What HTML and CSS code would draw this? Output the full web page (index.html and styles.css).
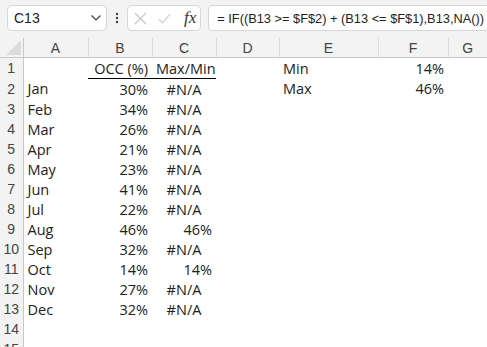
FILE: index.html
```html
<!DOCTYPE html>
<html>
<head>
  <title>Sheet1</title>
  <link rel="stylesheet" href="styles.css">
</head>
<body>
  <div class="toolbar">
    <div class="name-box">
      <span>C13</span>
      <svg class="chevron" width="12" height="8" viewBox="0 0 12 8"><path d="M1.5 1.5 L6 6 L10.5 1.5" fill="none" stroke="#444" stroke-width="1.2"/></svg>
    </div>
    <svg class="dots" width="4" height="12" viewBox="0 0 4 12"><circle cx="2" cy="2" r="1.2" fill="#444"/><circle cx="2" cy="6" r="1.2" fill="#444"/><circle cx="2" cy="10" r="1.2" fill="#444"/></svg>
    <div class="fx-box">
      <svg width="13" height="13" viewBox="0 0 13 13"><path d="M1 1 L12 12 M12 1 L1 12" stroke="#c4c4c4" stroke-width="1.1"/></svg>
      <svg width="13" height="11" viewBox="0 0 13 11"><path d="M1 6 L4.5 10 L12 1" fill="none" stroke="#c4c4c4" stroke-width="1.1"/></svg>
      <span class="fx">fx</span>
    </div>
    <div class="formula-box">= IF((B13 &gt;= $F$2) + (B13 &lt;= $F$1),B13,NA())</div>
  </div>

  <table class="sheet">
    <colgroup>
      <col style="width:23px"><col style="width:65px"><col style="width:64px"><col style="width:64px">
      <col style="width:63px"><col style="width:99px"><col style="width:70px"><col>
    </colgroup>
    <tr class="col-head">
      <th class="corner"><div class="tri"></div></th>
      <th>A</th><th>B</th><th>C</th><th>D</th><th>E</th><th>F</th><th>G</th>
    </tr>
    <tr><th>1</th><td></td><td class="num line">OCC (%)</td><td class="num line">Max/Min</td><td></td><td>Min</td><td class="num">14%</td><td></td></tr>
    <tr><th>2</th><td>Jan</td><td class="num">30%</td><td class="err">#N/A</td><td></td><td>Max</td><td class="num">46%</td><td></td></tr>
    <tr><th>3</th><td>Feb</td><td class="num">34%</td><td class="err">#N/A</td><td></td><td></td><td></td><td></td></tr>
    <tr><th>4</th><td>Mar</td><td class="num">26%</td><td class="err">#N/A</td><td></td><td></td><td></td><td></td></tr>
    <tr><th>5</th><td>Apr</td><td class="num">21%</td><td class="err">#N/A</td><td></td><td></td><td></td><td></td></tr>
    <tr><th>6</th><td>May</td><td class="num">23%</td><td class="err">#N/A</td><td></td><td></td><td></td><td></td></tr>
    <tr><th>7</th><td>Jun</td><td class="num">41%</td><td class="err">#N/A</td><td></td><td></td><td></td><td></td></tr>
    <tr><th>8</th><td>Jul</td><td class="num">22%</td><td class="err">#N/A</td><td></td><td></td><td></td><td></td></tr>
    <tr><th>9</th><td>Aug</td><td class="num">46%</td><td class="num">46%</td><td></td><td></td><td></td><td></td></tr>
    <tr><th>10</th><td>Sep</td><td class="num">32%</td><td class="err">#N/A</td><td></td><td></td><td></td><td></td></tr>
    <tr><th>11</th><td>Oct</td><td class="num">14%</td><td class="num">14%</td><td></td><td></td><td></td><td></td></tr>
    <tr><th>12</th><td>Nov</td><td class="num">27%</td><td class="err">#N/A</td><td></td><td></td><td></td><td></td></tr>
    <tr><th>13</th><td>Dec</td><td class="num">32%</td><td class="err">#N/A</td><td></td><td></td><td></td><td></td></tr>
    <tr><th>14</th><td></td><td></td><td></td><td></td><td></td><td></td><td></td></tr>
    <tr><th>15</th><td></td><td></td><td></td><td></td><td></td><td></td><td></td></tr>
  </table>
</body>
</html>
```

FILE: styles.css
```css
/* Sheet view */
body {
  margin: 0;
  background-color: #fff;
  font-family: "Open Sans", sans-serif;
  color: #222;
  overflow: hidden;
}

.toolbar {
  height: 38px;
  padding: 5px 0 0 7px;
  box-sizing: border-box;
  background-color: #f3f3f3;
  display: flex;
  align-items: flex-start;
}
.name-box,
.fx-box,
.formula-box {
  height: 26px;
  box-sizing: border-box;
  background-color: #fff;
  border: 1px solid #d6d6d6;
  border-radius: 5px;
  display: flex;
  align-items: center;
  font-size: 14px;
}
.name-box {
  flex: 0 0 100px;
  padding: 0 4px 0 6px;
  justify-content: space-between;
  font-family: "Liberation Sans", sans-serif;
}
.dots {
  flex: 0 0 auto;
  margin: 7px 8px 0 8px;
}
.fx-box {
  flex: 0 0 72px;
  padding: 0 4px 0 6px;
  gap: 11px;
}
.fx {
  font-family: "Liberation Serif", serif;
  font-style: italic;
  font-size: 17px;
  color: #333;
  margin-left: 2px;
}
.formula-box {
  flex: 1 1 auto;
  min-width: 0;
  overflow: hidden;
  margin-left: 7px;
  padding-left: 8px;
  border-right: none;
  border-radius: 5px 0 0 5px;
  font-family: "Liberation Sans", sans-serif;
  font-size: 12.8px;
  white-space: nowrap;
  color: #222;
}

.sheet {
  border-collapse: collapse;
  table-layout: fixed;
  width: 100%;
}
.sheet th {
  font-weight: normal;
  font-family: "Liberation Sans", sans-serif;
  font-size: 14px;
  color: #444;
  background-color: #f3f3f3;
  border-right: 1px solid #c8c8c8;
  padding: 0;
  height: 20px;
  text-align: center;
}
.col-head th {
  height: 19px;
  border-right: 1px solid #dcdcdc;
  border-bottom: 1px solid #c8c8c8;
}
.col-head th:last-child {
  border-right: none;
}
.sheet th.corner {
  position: relative;
  border-right: 1px solid #c8c8c8;
}
.tri {
  position: absolute;
  right: 2px;
  bottom: 2px;
  width: 0;
  height: 0;
  border-left: 15px solid transparent;
  border-bottom: 15px solid #dcdcdc;
}
.sheet td {
  height: 20px;
  padding: 0 4px;
  font-size: 14.5px;
  white-space: nowrap;
  overflow: visible;
}
.sheet td.num {
  text-align: right;
}
.sheet td.err {
  text-align: center;
}
.sheet td.line {
  border-bottom: 1px solid #000;
}
```
